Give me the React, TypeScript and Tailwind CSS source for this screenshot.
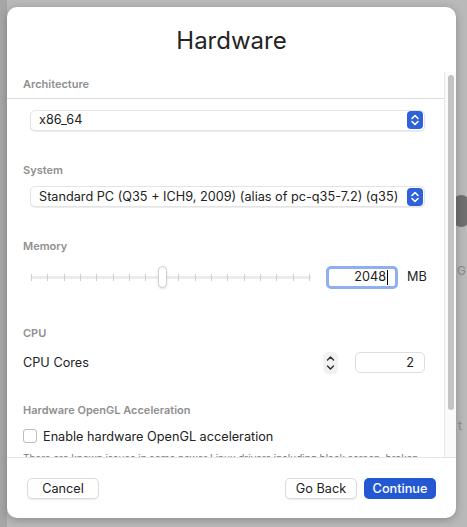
import React from "react"

const font = { fontFamily: "Inter, 'Liberation Sans', sans-serif" }

const BlueStepper = () => (
  <svg width="16" height="18" viewBox="0 0 16 18">
    <rect x="0" y="0" width="16" height="18" rx="4" fill="#2f62d9" />
    <path d="M5 7.5 L8 4.5 L11 7.5" fill="none" stroke="#fff" strokeWidth="1.6" strokeLinecap="round" strokeLinejoin="round" />
    <path d="M5 10.5 L8 13.5 L11 10.5" fill="none" stroke="#fff" strokeWidth="1.6" strokeLinecap="round" strokeLinejoin="round" />
  </svg>
)

const SectionLabel = ({ children }: { children: React.ReactNode }) => (
  <div className="text-[11px] font-semibold text-[#8f8f8f]">{children}</div>
)

const PopUp = ({ value }: { value: string }) => (
  <div className="flex h-[21px] items-center justify-between rounded-[5px] border border-[#e4e4e4] bg-white pl-2 pr-px shadow-[0_1px_1px_rgba(0,0,0,0.08)]">
    <span className="whitespace-nowrap text-[12.7px] text-[#222]">{value}</span>
    <BlueStepper />
  </div>
)

export default function App() {
  const ticks = Array.from({ length: 18 }, (_, i) => i)

  return (
    <div className="relative flex h-[527px] w-[467px] overflow-hidden bg-[#b9b9b9]" style={font}>
      <div className="w-[7px] shrink-0 bg-[#a6a6a6]" />
      {/* background app bits peeking on the right */}
      <div className="absolute left-[452px] top-[195px] h-[32px] w-[18px] rounded-full bg-[#6f6f6f]" />
      <div className="absolute left-[457px] top-[262px] text-[12px] text-[#8a8a8a]">G</div>
      <div className="absolute left-[458px] top-[417px] text-[12px] text-[#8a8a8a]">t</div>

      <div className="relative z-10 mt-[7px] flex h-[511px] w-[449px] flex-col overflow-hidden rounded-[10px] bg-white shadow-[0_2px_8px_rgba(0,0,0,0.25)]">
        <div className="pt-[19px] pb-[16px] text-center text-[24px] leading-[30px] text-[#242424]">Hardware</div>

        <div className="flex h-[386px] border-b border-[#e3e3e3]">
          <div className="flex w-[437px] flex-col overflow-hidden">
            <div className="border-b border-[#dcdcdc] pl-4 pt-[4px] pb-[5px]">
              <SectionLabel>Architecture</SectionLabel>
            </div>

            <div className="pl-[23px] pr-[19px] pt-[11px]">
              <PopUp value="x86_64" />
            </div>

            <div className="pl-4 pt-[31px]">
              <SectionLabel>System</SectionLabel>
            </div>
            <div className="pl-[23px] pr-[19px] pt-[8px]">
              <PopUp value="Standard PC (Q35 + ICH9, 2009) (alias of pc-q35-7.2) (q35)" />
            </div>

            <div className="pl-4 pt-[31px]">
              <SectionLabel>Memory</SectionLabel>
            </div>
            <div className="flex items-center pl-[24px] pt-[11px]">
              <div className="relative h-[22px] w-[280px]">
                <div className="absolute left-0 right-0 top-[10px] h-[3px] rounded bg-[#ececec]" />
                {ticks.map((i) => (
                  <div
                    key={i}
                    className="absolute top-[8px] h-[7px] w-px bg-[#cfcfcf]"
                    style={{ left: `${i * 16.35}px` }}
                  />
                ))}
                <div className="absolute left-[127px] top-0 h-[22px] w-[9px] rounded-full border border-[#d0d0d0] bg-white shadow-sm" />
              </div>
              <div className="ml-[15px] flex h-[23px] w-[72px] items-center justify-end rounded-[5px] border-[3px] border-[#8fb0f0] bg-white pr-[7px] text-[12.7px] text-[#222]">
                2048<span className="ml-px inline-block h-[15px] w-px bg-black" />
              </div>
              <span className="ml-[9px] text-[12.7px] text-[#222]">MB</span>
            </div>

            <div className="pl-4 pt-[36px]">
              <SectionLabel>CPU</SectionLabel>
            </div>
            <div className="flex items-center pl-4 pr-[19px] pt-[11px]">
              <span className="text-[12.7px] text-[#222]">CPU Cores</span>
              <div className="ml-auto flex h-[20px] w-[13px] items-center justify-center rounded-[4px] bg-[#f2f2f2] shadow-[0_0_0_0.5px_rgba(0,0,0,0.1)]">
                <svg width="13" height="20" viewBox="0 0 13 20">
                  <path d="M3.5 7 L6.5 4 L9.5 7" fill="none" stroke="#333" strokeWidth="1.5" strokeLinecap="round" strokeLinejoin="round" />
                  <path d="M3.5 13 L6.5 16 L9.5 13" fill="none" stroke="#333" strokeWidth="1.5" strokeLinecap="round" strokeLinejoin="round" />
                </svg>
              </div>
              <div className="ml-[18px] flex h-[21px] w-[70px] items-center justify-end rounded-[5px] border border-[#dedede] bg-white pr-[10px] text-[12.7px] text-[#222]">
                2
              </div>
            </div>

            <div className="pl-4 pt-[29px]">
              <SectionLabel>Hardware OpenGL Acceleration</SectionLabel>
            </div>
            <div className="flex items-center pl-4 pt-[8px]">
              <div className="h-[14px] w-[14px] rounded-[3px] border border-[#bdbdbd] bg-white" />
              <span className="ml-[6px] text-[12.7px] text-[#222]">Enable hardware OpenGL acceleration</span>
            </div>
            <div className="whitespace-nowrap pl-4 pt-[5px] text-[10px] text-[#777]">
              There are known issues in some newer Linux drivers including black screen, broken
            </div>
          </div>
          <div className="flex w-[12px] justify-center border-l border-[#e8e8e8] bg-[#fafafa] pt-[3px]">
            <div className="h-[335px] w-[6px] rounded-full bg-[#c3c3c3]" />
          </div>
        </div>

        <div className="flex items-center px-[20px] pt-[20px]">
          <button className="h-[21px] w-[72px] rounded-[5px] border border-[#dcdcdc] bg-white text-[12.7px] text-[#222] shadow-[0_1px_1px_rgba(0,0,0,0.08)]">
            Cancel
          </button>
          <button className="ml-auto h-[21px] w-[72px] rounded-[5px] border border-[#dcdcdc] bg-white text-[12.7px] text-[#222] shadow-[0_1px_1px_rgba(0,0,0,0.08)]">
            Go Back
          </button>
          <button className="ml-[7px] h-[21px] w-[72px] rounded-[5px] bg-[#2458d2] text-[12.7px] font-medium text-white">
            Continue
          </button>
        </div>
      </div>
    </div>
  )
}
